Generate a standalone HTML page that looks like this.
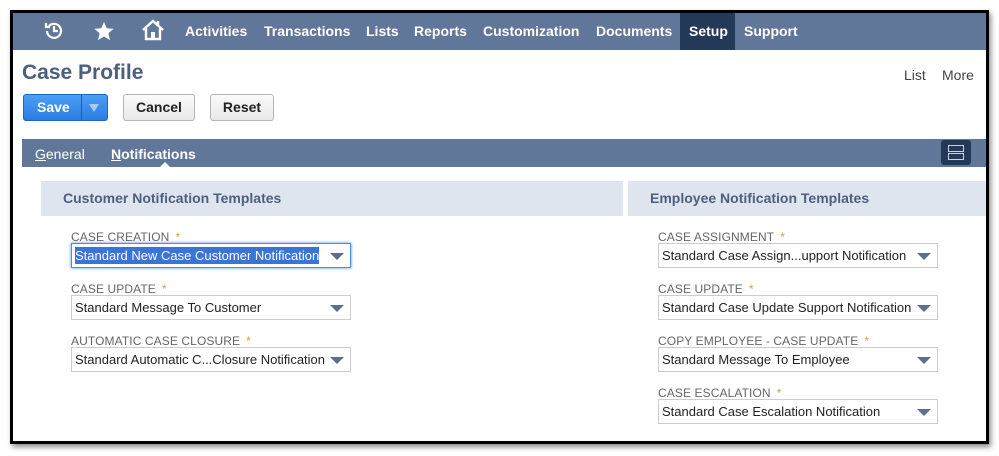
<!DOCTYPE html>
<html><head><style>
*{margin:0;padding:0;box-sizing:border-box}
body{width:999px;height:456px;background:#fff;font-family:"Liberation Sans",Arial,sans-serif;position:relative;overflow:hidden}
.frame{position:absolute;left:10px;top:10px;width:979px;height:434px;border:3px solid #000;box-shadow:2px 3px 5px rgba(0,0,0,.45);background:#fff;overflow:hidden}
.a{position:absolute}
.nav{left:0;top:0;width:973px;height:37px;background:#607799}
.nav span{position:absolute;top:10px;color:#fff;font-weight:bold;font-size:14px}
.btn{position:absolute;top:81px;height:27px;border:1px solid #b5b5b5;border-radius:3px;background:linear-gradient(#fafafa,#e8e8e8);font-weight:bold;font-size:14px;color:#222;text-align:center;line-height:25px}
.lbl{position:absolute;font-size:12px;color:#666;letter-spacing:.1px}
.lbl b{color:#e39a2c;font-weight:normal;margin-left:6px}
.sel{position:absolute;width:280px;height:25px;border:1px solid #ccc;font-size:13px;color:#222;line-height:23px;padding-left:3px;white-space:nowrap;overflow:hidden}
.sel:after{content:"";position:absolute;right:6px;top:9px;border-left:7px solid transparent;border-right:7px solid transparent;border-top:7px solid #5d6f8c}
.hd{position:absolute;top:168px;height:35px;background:#dfe5ee;font-weight:bold;font-size:14px;color:#4d5f7c;line-height:35px}
</style></head><body>
<div class="frame">
<div class="a nav">
 <svg class="a" style="left:30px;top:7px" width="22" height="22" viewBox="0 0 22 22" fill="none" stroke="#fff" stroke-width="2.2"><path d="M6 6A7 7 0 1 1 4 11"/><path d="M3 3v4h4" /><path d="M11 6v5h4"/></svg>
 <svg class="a" style="left:80px;top:7px" width="22" height="22" viewBox="0 0 24 24"><path fill="#fff" d="M12 2l3 7 7.5.6-5.7 4.9 1.8 7.4L12 18l-6.6 3.9 1.8-7.4L1.5 9.6 9 9z"/></svg>
 <svg class="a" style="left:128px;top:5px" width="24" height="24" viewBox="0 0 24 24" fill="none" stroke="#fff" stroke-width="2.4"><path d="M2 12L12 3l10 9"/><path d="M5 10v11h14V10"/><rect x="10" y="14" width="4" height="7" fill="#fff" stroke="none"/><path d="M17 3v4"/></svg>
 <span style="left:172px">Activities</span>
 <span style="left:251px">Transactions</span>
 <span style="left:353px">Lists</span>
 <span style="left:401px">Reports</span>
 <span style="left:470px">Customization</span>
 <span style="left:583px">Documents</span>
 <div class="a" style="left:667px;top:0;width:55px;height:37px;background:#243858"></div>
 <span style="left:676px">Setup</span>
 <span style="left:731px">Support</span>
</div>
<div class="a" style="left:9px;top:48px;font-size:21px;font-weight:bold;color:#4d5f7c">Case Profile</div>
<div class="a" style="left:891px;top:54px;font-size:14px;color:#444">List</div>
<div class="a" style="left:929px;top:54px;font-size:14px;color:#444">More</div>
<div class="a" style="left:10px;top:81px;width:85px;height:27px;border-radius:3px;background:linear-gradient(#4d9ef5,#2a7de1);border:1px solid #1f66c2"></div>
<div class="a" style="left:24px;top:86px;color:#fff;font-weight:bold;font-size:14px">Save</div>
<div class="a" style="left:68px;top:82px;width:1px;height:25px;background:#1d5bb0"></div>
<div class="a" style="left:76px;top:91px;border-left:5px solid transparent;border-right:5px solid transparent;border-top:8px solid #a9c9f2"></div>
<div class="btn" style="left:110px;width:72px">Cancel</div>
<div class="btn" style="left:197px;width:64px">Reset</div>
<div class="a" style="left:9px;top:126px;width:964px;height:28px;background:#607799"></div>
<div class="a" style="left:22px;top:133px;color:#fff;font-size:14px"><u>G</u>eneral</div>
<div class="a" style="left:98px;top:133px;color:#fff;font-size:14px;font-weight:bold"><u>N</u>otifications</div>
<div class="a" style="left:147px;top:149px;border-left:5px solid transparent;border-right:5px solid transparent;border-bottom:5px solid #fff"></div>
<div class="a" style="left:928px;top:127px;width:30px;height:25px;background:#243858;border-radius:3px"></div>
<div class="a" style="left:935px;top:132px;width:16px;height:7px;border:1.5px solid #c8d2e0"></div>
<div class="a" style="left:935px;top:140px;width:16px;height:7px;border:1.5px solid #c8d2e0"></div>
<div class="hd" style="left:28px;width:582px;padding-left:22px">Customer Notification Templates</div>
<div class="hd" style="left:615px;width:360px;padding-left:22px">Employee Notification Templates</div>

<div class="lbl" style="left:58px;top:217px">CASE CREATION<b>*</b></div>
<div class="sel" style="left:58px;top:230px;border:1px solid #4a90e2;box-shadow:0 0 3px #4a90e2"><span style="background:#3875d7;color:#fff;padding:1px 0">Standard New Case Customer Notification</span></div>
<div class="lbl" style="left:58px;top:269px">CASE UPDATE<b>*</b></div>
<div class="sel" style="left:58px;top:282px">Standard Message To Customer</div>
<div class="lbl" style="left:58px;top:321px">AUTOMATIC CASE CLOSURE<b>*</b></div>
<div class="sel" style="left:58px;top:334px">Standard Automatic C...Closure Notification</div>

<div class="lbl" style="left:645px;top:217px">CASE ASSIGNMENT<b>*</b></div>
<div class="sel" style="left:645px;top:230px">Standard Case Assign...upport Notification</div>
<div class="lbl" style="left:645px;top:269px">CASE UPDATE<b>*</b></div>
<div class="sel" style="left:645px;top:282px">Standard Case Update Support Notification</div>
<div class="lbl" style="left:645px;top:321px">COPY EMPLOYEE - CASE UPDATE<b>*</b></div>
<div class="sel" style="left:645px;top:334px">Standard Message To Employee</div>
<div class="lbl" style="left:645px;top:373px">CASE ESCALATION<b>*</b></div>
<div class="sel" style="left:645px;top:386px">Standard Case Escalation Notification</div>
</div>
</body></html>
